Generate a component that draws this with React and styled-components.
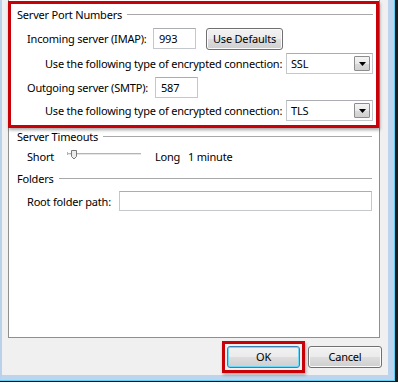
import React from 'react';
import styled, { createGlobalStyle } from 'styled-components';

const Global = createGlobalStyle`
  *, *::before, *::after { box-sizing: border-box; }
  html, body { margin: 0; padding: 0; background: #fff; }
  body {
    font-family: "Noto Sans", "Open Sans", sans-serif;
    font-size: 11px;
    letter-spacing: -0.2px;
    color: #000;
  }
`;

const Screen = styled.div`
  width: 398px;
  height: 385px;
  overflow: hidden;
  background: #fff;
`;

const OuterEdge = styled.div`
  width: 398px;
  height: 382px;
  border-right: 3px solid #1d1d1d;
  border-bottom: 1px solid #111;
`;

const Glow = styled.div`
  height: 100%;
  border-right: 1px solid #63cdef;
  border-bottom: 1px solid #63cdef;
`;

const Frame = styled.div`
  height: 100%;
  display: flex;
  flex-direction: column;
  background: #f0f0f0;
  border-left: 2px solid #b9d1ea;
  border-right: 6px solid #bcd4ee;
  border-bottom: 5px solid #bcd4ee;
`;

const Panel = styled.div`
  margin: 0 8px 0 6px;
  height: 338px;
  background: #fff;
  border: 1px solid #8e8f8f;
  border-top: none;
  display: flex;
  flex-direction: column;
`;

const Highlight = styled.div`
  margin: 1px 0 0 -1px;
  width: 371px;
  height: 127px;
  border: 3px solid #c80008;
  box-shadow: 1px 2px 3px rgba(0, 0, 0, 0.35);
  display: flex;
  flex-direction: column;
`;

const Section = styled.div`
  display: flex;
  flex-direction: column;
  padding-left: ${p => (p.$inBox ? 6 : 8)}px;
  padding-right: ${p => (p.$inBox ? 3 : 7)}px;
`;

const GroupHeader = styled.div`
  display: flex;
  align-items: center;
  height: 16px;
  margin-top: ${p => p.$top || 0}px;
  white-space: nowrap;
`;

const Rule = styled.div`
  flex: 1;
  height: 1px;
  margin-left: 5px;
  background: #a8a8a8;
`;

const Row = styled.div`
  display: flex;
  align-items: center;
  height: ${p => p.$h || 21}px;
  margin-top: ${p => p.$top || 0}px;
  padding-left: ${p => p.$indent || 10}px;
  white-space: nowrap;
`;

const Label = styled.span`
  display: inline-block;
  width: ${p => (p.$w ? `${p.$w}px` : 'auto')};
  margin-left: ${p => p.$ml || 0}px;
  flex: none;
`;

const TextBox = styled.div`
  display: flex;
  align-items: center;
  height: ${p => p.$h || 21}px;
  width: ${p => (p.$w ? `${p.$w}px` : 'auto')};
  flex: ${p => (p.$w ? 'none' : '1')};
  padding-left: 5px;
  background: #fff;
  border: 1px solid #c4c7cc;
  border-top-color: #abadb3;
`;

const PushButton = styled.button`
  font: inherit;
  letter-spacing: inherit;
  color: #000;
  height: 22px;
  width: ${p => p.$w}px;
  margin-left: ${p => p.$ml || 0}px;
  padding: 0;
  border-radius: 3px;
  border: 1px solid ${p => (p.$default ? '#3c7fb1' : '#707070')};
  box-shadow: inset 0 0 0 1px ${p => (p.$default ? '#6fd9fb' : '#fcfcfc')};
  background: linear-gradient(#f2f2f2 0%, #ebebeb 48%, #dddddd 52%, #cfcfcf 100%);
  line-height: 18px;
`;

const Select = styled.div`
  margin-left: auto;
  width: 87px;
  height: 21px;
  display: flex;
  align-items: center;
  padding-left: 4px;
  padding-right: 2px;
  background: #fff;
  border: 1px solid #c4c7cc;
  border-top-color: #abadb3;
`;

const SelectValue = styled.span`
  flex: 1;
`;

const DropButton = styled.div`
  width: 16px;
  height: 15px;
  display: flex;
  align-items: center;
  justify-content: center;
  border: 1px solid #8d8d8d;
  border-radius: 1px;
  background: linear-gradient(#f4f4f4 0%, #e9e9e9 50%, #dadada 51%, #d0d0d0 100%);
`;

const ButtonBar = styled.div`
  display: flex;
  justify-content: flex-end;
  align-items: center;
  margin-top: 3px;
  padding-right: 6px;
`;

const ButtonMark = styled.div`
  border: 3px solid #c80008;
  padding: 2px;
  box-shadow: 1px 2px 3px rgba(0, 0, 0, 0.3);
`;

const Arrow = () => (
  <svg width="7" height="4" viewBox="0 0 7 4">
    <polygon points="0,0 7,0 3.5,4" fill="#000" />
  </svg>
);

const Slider = () => (
  <svg width="74" height="16" viewBox="0 0 74 16" style={{ flex: 'none' }}>
    <rect x="0" y="5" width="74" height="1" fill="#b4b4b4" />
    <rect x="0" y="6" width="74" height="1" fill="#e6e6e6" />
    <rect x="0" y="4" width="1" height="3" fill="#b4b4b4" />
    <polygon points="4.5,2.5 9.5,2.5 9.5,8.5 7,11 4.5,8.5" fill="#ececec" stroke="#7a7a7a" strokeWidth="1" />
  </svg>
);

const ComboBox = ({ value }) => (
  <Select>
    <SelectValue>{value}</SelectValue>
    <DropButton>
      <Arrow />
    </DropButton>
  </Select>
);

export default function App() {
  return (
    <Screen>
      <Global />
      <OuterEdge>
        <Glow>
          <Frame>
            <Panel>
              <Highlight>
                <Section $inBox>
                  <GroupHeader $top={2}>
                    Server Port Numbers
                    <Rule />
                  </GroupHeader>
                  <Row $top={6}>
                    <Label $w={126}>Incoming server (IMAP):</Label>
                    <TextBox $w={43}>993</TextBox>
                    <PushButton $w={77} $ml={10}>Use Defaults</PushButton>
                  </Row>
                  <Row $top={4} $indent={28}>
                    <Label>Use the following type of encrypted connection:</Label>
                    <ComboBox value="SSL" />
                  </Row>
                  <Row $top={3}>
                    <Label $w={128}>Outgoing server (SMTP):</Label>
                    <TextBox $w={43}>587</TextBox>
                  </Row>
                  <Row $top={2} $indent={28}>
                    <Label>Use the following type of encrypted connection:</Label>
                    <ComboBox value="TLS" />
                  </Row>
                </Section>
              </Highlight>
              <Section>
                <GroupHeader>
                  Server Timeouts
                  <Rule />
                </GroupHeader>
                <Row $top={4} $h={16}>
                  <Label $w={40}>Short</Label>
                  <Slider />
                  <Label $w={33} $ml={14}>Long</Label>
                  <Label>1 minute</Label>
                </Row>
                <GroupHeader $top={6}>
                  Folders
                  <Rule />
                </GroupHeader>
                <Row $top={5} $h={20}>
                  <Label $w={92}>Root folder path:</Label>
                  <TextBox $h={20} />
                </Row>
              </Section>
            </Panel>
            <ButtonBar>
              <ButtonMark>
                <PushButton $w={73} $default>OK</PushButton>
              </ButtonMark>
              <PushButton $w={74} $ml={3}>Cancel</PushButton>
            </ButtonBar>
          </Frame>
        </Glow>
      </OuterEdge>
    </Screen>
  );
}
